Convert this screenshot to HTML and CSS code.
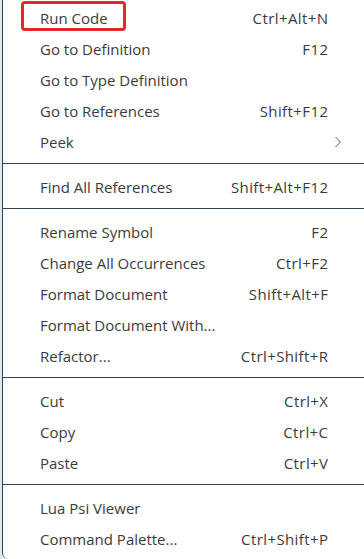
FILE: index.html
```html
<!DOCTYPE HTML>
<html>
<head>
  <title>Context Menu</title>
  <meta charset="utf-8">
  <link rel="stylesheet" href="styles.css">
</head>
<body>
  <div class="menu">
    <div class="item highlight"><span class="label">Run Code</span><span class="key">Ctrl+Alt+N</span></div>
    <div class="item"><span class="label">Go to Definition</span><span class="key">F12</span></div>
    <div class="item"><span class="label">Go to Type Definition</span><span class="key"></span></div>
    <div class="item"><span class="label">Go to References</span><span class="key">Shift+F12</span></div>
    <div class="item"><span class="label">Peek</span>
      <svg class="arrow" width="8" height="12" viewBox="0 0 8 12"><path d="M1.5 1 L6.5 6 L1.5 11" fill="none" stroke="#555" stroke-width="1"/></svg>
    </div>
    <div class="sep"></div>
    <div class="item"><span class="label">Find All References</span><span class="key">Shift+Alt+F12</span></div>
    <div class="sep"></div>
    <div class="item"><span class="label">Rename Symbol</span><span class="key">F2</span></div>
    <div class="item"><span class="label">Change All Occurrences</span><span class="key">Ctrl+F2</span></div>
    <div class="item"><span class="label">Format Document</span><span class="key">Shift+Alt+F</span></div>
    <div class="item"><span class="label">Format Document With...</span><span class="key"></span></div>
    <div class="item"><span class="label">Refactor...</span><span class="key">Ctrl+Shift+R</span></div>
    <div class="sep"></div>
    <div class="item"><span class="label">Cut</span><span class="key">Ctrl+X</span></div>
    <div class="item"><span class="label">Copy</span><span class="key">Ctrl+C</span></div>
    <div class="item"><span class="label">Paste</span><span class="key">Ctrl+V</span></div>
    <div class="sep"></div>
    <div class="item"><span class="label">Lua Psi Viewer</span><span class="key"></span></div>
    <div class="item"><span class="label">Command Palette...</span><span class="key">Ctrl+Shift+P</span></div>
  </div>
</body>
</html>
```

FILE: styles.css
```css
html, body {
  margin: 0;
  padding: 0;
  background-color: #fff;
}

body {
  width: 364px;
  height: 559px;
  overflow: hidden;
  font-family: "Open Sans", "Noto Sans", sans-serif;
  font-size: 15px;
  color: #3b3b3b;
  border-left: 2px solid #dfe7ee;
  box-sizing: border-box;
}

.menu {
  position: relative;
  border-left: 1px solid #2c4452;
  border-bottom-left-radius: 6px;
  padding-top: 2px;
  height: 100%;
  box-sizing: border-box;
}

.item {
  display: flex;
  align-items: center;
  justify-content: space-between;
  height: 31px;
  padding: 0 36px 0 37px;
}

.key {
  color: #3b3b3b;
  letter-spacing: 0.4px;
  margin-right: -0.4px;
}

.arrow {
  margin-right: -14px;
}

.sep {
  height: 1px;
  background-color: #2c4452;
  margin: 6px 0 7px 0;
}

.highlight::before {
  content: "";
  position: absolute;
  left: 18px;
  top: 1px;
  width: 99px;
  height: 24px;
  border: 3px solid #e3282c;
  border-radius: 4px;
}
```
